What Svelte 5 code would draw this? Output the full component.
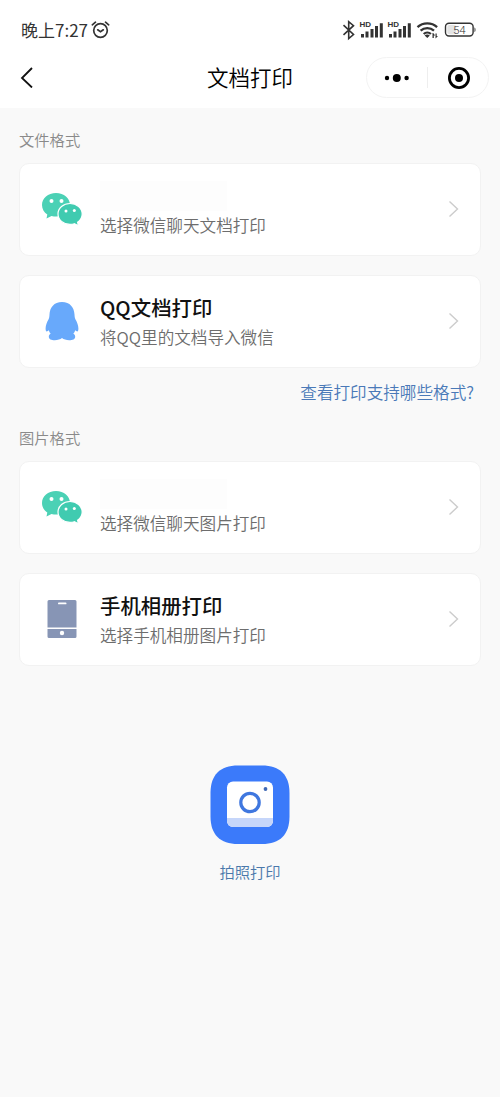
<script>
    const sections = [
        {
            name: '文件格式',
            items: [
                {icon: 'wechat', title: '', desc: '选择微信聊天文档打印'},
                {icon: 'qq', title: 'QQ文档打印', desc: '将QQ里的文档导入微信'}
            ],
            link: '查看打印支持哪些格式?'
        },
        {
            name: '图片格式',
            items: [
                {icon: 'wechat', title: '', desc: '选择微信聊天图片打印'},
                {icon: 'phone', title: '手机相册打印', desc: '选择手机相册图片打印'}
            ]
        }
    ];
</script>

<style>
    :global(body) {
        background: #f9f9f9;
    }

    .page {
        min-height: 1097px;
        background: #f9f9f9;
        font-family: "Noto Sans CJK SC", sans-serif;
        font-weight: 350;
    }

    svg {
        display: block;
        flex: none;
    }

    header {
        height: 108px;
        background: #fff;
    }

    .status {
        height: 46px;
        padding: 14px 22px 0 21px;
        box-sizing: border-box;
        display: flex;
        align-items: center;
        justify-content: space-between;
        color: #333;
    }

    .time {
        display: flex;
        align-items: center;
        gap: 3px;
        font-size: 17px;
        line-height: 30px;
        font-weight: 400;
    }

    .nav {
        height: 62px;
        display: grid;
        grid-template-columns: 134px 1fr 134px;
        align-items: center;
    }

    .back {
        margin-left: 20px;
    }

    h1 {
        margin: 0;
        text-align: center;
        font-size: 21.5px;
        line-height: 32px;
        font-weight: 350;
        color: #000;
    }

    .capsule {
        width: 123px;
        height: 41px;
        box-sizing: border-box;
        border: 1px solid #f3f3f3;
        border-radius: 21px;
        display: flex;
        align-items: center;
    }

    main {
        padding: 19px 19px 0;
    }

    section {
        margin-bottom: 21px;
    }

    h2 {
        margin: 0 0 12px;
        font-size: 15.3px;
        line-height: 24px;
        font-weight: 350;
        color: #8a8a8a;
    }

    .card {
        height: 93px;
        margin-bottom: 19px;
        padding: 0 21px 1px 20px;
        box-sizing: border-box;
        border: 1px solid #f2f2f2;
        border-radius: 10px;
        background: #fff;
        display: flex;
        align-items: center;
    }

    .icon {
        width: 44px;
        display: flex;
        justify-content: center;
    }

    .text {
        flex: 1;
        margin: 3px 0 0 16px;
    }

    .title {
        height: 30px;
        font-size: 20.4px;
        line-height: 29px;
        font-weight: 500;
        color: #111;
    }

    .blank {
        width: 127px;
        background: #fdfdfd;
    }

    .desc {
        font-size: 16.6px;
        line-height: 29px;
        color: #6d6d6d;
    }

    .link {
        margin: -7px 7px 0 0;
        text-align: right;
        font-size: 16.6px;
        line-height: 24px;
        color: #4a79b8;
    }

    .camera {
        padding-top: 78px;
        display: flex;
        flex-direction: column;
        align-items: center;
        font-size: 15.3px;
        line-height: 24px;
        color: #4a78ab;
    }

    .camera span {
        margin-top: 14px;
    }
</style>

<div class="page">
    <header>
        <div class="status">
            <div class="time">
                晚上7:27
                <svg width="19" height="19" viewBox="0 0 19 19" fill="none" stroke="#333" stroke-width="1.7" stroke-linecap="round">
                    <circle cx="9.5" cy="9.5" r="6.8"/>
                    <path d="M1.3 3.8 4.5 1.2M17.7 3.8 14.5 1.2M6.7 8.8l2.8 2 2.8-2"/>
                </svg>
            </div>
            <svg width="136" height="22" viewBox="0 0 136 22" fill="#333">
                <path d="M1.500 6.2 11.500 15.5 6.700 19.5V2.7L11.500 6.7 1.500 15.8" fill="none" stroke="#333" stroke-width="1.6"/>
                {#each [18, 46] as x}
                    <g transform="translate({x} 0)">
                        <text x="-.5" y="8" font-family="Liberation Sans, sans-serif" font-size="8" font-weight="700">HD</text>
                        <path d="M1 15h3v3.500H1zM5.500 12.500h3v6h-3zM10.500 10h3v8.500h-3zM15 7h3v11.500h-3zM19.800 4.300h3v14.200h-3z"/>
                    </g>
                {/each}
                <g fill="none" stroke="#333" stroke-width="2.3">
                    <path d="M75.500 8.2c5.500-5 14.100-5 19.600 0M78.600 11.700c3.800-3.500 9.600-3.500 13.400 0M81.700 15c2-1.900 5.200-1.900 7.200 0"/>
                </g>
                <path d="m82.600 16.500 2.700 2.600 2.500-2.600c-1.400-1.300-3.700-1.300-5.200 0zM91.200 14l2 2.400h-1.400V19h-1.300v-5zM93.500 19.500V14.500h1.200v2.600H96z"/>
                <rect x="103.500" y="4.200" width="27.600" height="12.800" rx="3.500" fill="none" stroke="#333" stroke-width="1.400"/>
                <rect x="105.300" y="6" width="9" height="9.200" rx="2" fill="#e4e4e4"/>
                <path d="M132.500 8.500c1.300.3 1.300 4.200 0 4.500z"/>
                <text x="117.300" y="14.800" text-anchor="middle" font-family="Roboto, sans-serif" font-size="11.500">54</text>
            </svg>
        </div>
        <div class="nav">
            <svg class="back" width="14" height="22" viewBox="0 0 14 22" fill="none" stroke="#111" stroke-width="1.8">
                <path d="M12 2 2 12l10 9.500"/>
            </svg>
            <h1>文档打印</h1>
            <div class="capsule">
                <svg width="121" height="39" viewBox="0 0 121 39">
                    <circle cx="20" cy="20" r="2.200"/>
                    <circle cx="29.800" cy="20" r="4"/>
                    <circle cx="39.600" cy="20" r="2.200"/>
                    <path d="M60.500 9v21" stroke="#eee"/>
                    <circle cx="92" cy="20" r="9.600" fill="none" stroke="#000" stroke-width="2.800"/>
                    <circle cx="92" cy="20" r="4"/>
                </svg>
            </div>
        </div>
    </header>

    <main>
        {#each sections as section}
            <section>
                <h2>{section.name}</h2>
                {#each section.items as item}
                    <div class="card">
                        <div class="icon">
                            {#if item.icon === 'wechat'}
                                <svg width="42" height="34" viewBox="0 0 42 34">
                                    <path d="M15 1C7 1 1 6 1 13c0 4 2 7.300 5.300 9.500L5.500 26.500l5-2.500c9.500 2.300 18.500-2.500 18.500-11C29 6 23 1 15 1z" fill="#4bd1b5"/>
                                    <path d="M29 11.500c-6.600 0-12 4.600-12 10.500s5.400 10.400 12 10.400c1.500 0 3-.2 4.300-.7l4.200 2.100-.9-3.500c2.800-2 4.600-5 4.600-8.300 0-5.900-5.500-10.500-12.200-10.500z" fill="#40cbb0" stroke="#fff" stroke-width="1.200"/>
                                    <g fill="#fff">
                                        <circle cx="10.500" cy="9" r="2"/>
                                        <circle cx="20.500" cy="9" r="2"/>
                                        <circle cx="25" cy="19" r="1.500"/>
                                        <circle cx="33.300" cy="18.500" r="1.500"/>
                                    </g>
                                </svg>
                            {:else if item.icon === 'qq'}
                                <svg width="34" height="40" viewBox="0 0 34 40" fill="#68a9fb">
                                    <path d="M17 1C9 1 4.800 6.500 4.500 13.500c-.1 2-.3 3.500-.9 4.800C1.800 21.500.6 24.500.6 27.500c0 2 .4 3 1.200 3 .7 0 1.300-.5 2-1.200.4 1.500 1 2.500 1.900 3.500-1.300.8-1.900 1.700-1.900 2.900 0 2.400 2.500 3.500 6 3.500 3 0 5.500-.9 7.200-2.200 1.700 1.300 4.200 2.200 7.200 2.200 3.500 0 6-1.100 6-3.500 0-1.200-.6-2.100-1.900-2.900.9-1 1.500-2 1.900-3.500.7.700 1.300 1.200 2 1.200.8 0 1.200-1 1.200-3 0-3-1.200-6-3-9.200-.6-1.300-.8-2.800-.9-4.800C29.200 6.500 25 1 17 1z"/>
                                </svg>
                            {:else}
                                <svg width="30" height="38" viewBox="0 0 30 38">
                                    <path d="M2 0h26a1.500 1.500 0 0 1 1.500 1.500V27.500H.5v-26A1.500 1.500 0 0 1 2 0zM.5 29h29v7.500A1.500 1.500 0 0 1 28 38H2a1.500 1.500 0 0 1-1.500-1.500z" fill="#8795b5"/>
                                    <rect x="11" y="2.500" width="8.500" height="1.800" rx=".9" fill="#fff"/>
                                    <circle cx="15" cy="33" r="2.200" fill="#fff"/>
                                </svg>
                            {/if}
                        </div>
                        <div class="text">
                            <div class="title" class:blank={!item.title}>{item.title}</div>
                            <div class="desc">{item.desc}</div>
                        </div>
                        <svg width="11" height="18" viewBox="0 0 11 18" fill="none" stroke="#ccc" stroke-width="1.400">
                            <path d="m1.500 1.500 8 7.500-8 7.500"/>
                        </svg>
                    </div>
                {/each}
                {#if section.link}
                    <div class="link">{section.link}</div>
                {/if}
            </section>
        {/each}

        <div class="camera">
            <svg width="80" height="80" viewBox="0 0 80 80">
                <path d="M28 .5h24C70 .5 79.500 10 79.500 28v23.500c0 18-9.500 27.500-27.500 27.500H28C10 79 .5 69.500.5 51.500V28C.5 10 10 .5 28 .5z" fill="#3b7afa"/>
                <rect x="17" y="16.500" width="46" height="45.500" rx="6" fill="#fff"/>
                <path d="M17 53h46v3a6 6 0 0 1-6 6H23a6 6 0 0 1-6-6z" fill="#c6d6fa"/>
                <circle cx="40" cy="37.500" r="9.200" fill="none" stroke="#3f77df" stroke-width="3.200"/>
                <circle cx="55.500" cy="24" r="1.900" fill="#3f68b5"/>
            </svg>
            <span>拍照打印</span>
        </div>
    </main>
</div>
